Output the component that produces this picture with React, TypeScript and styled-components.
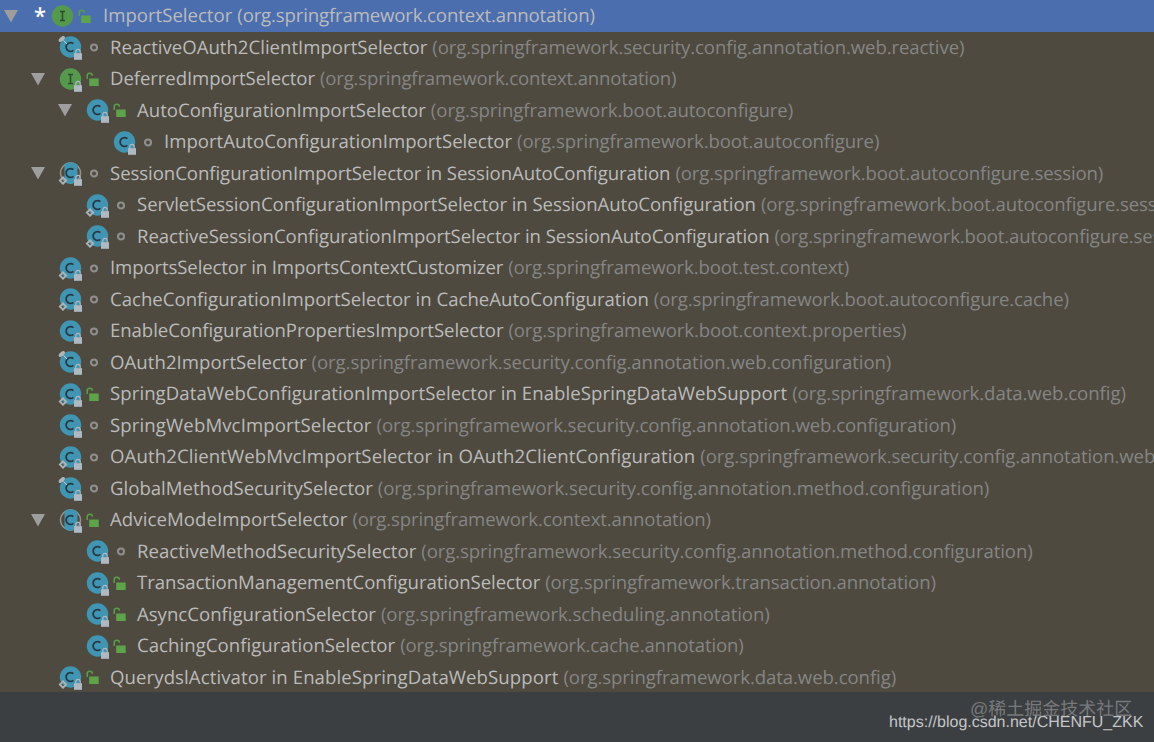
import React from "react";
import styled, { createGlobalStyle } from "styled-components";

const Global = createGlobalStyle`
  html, body { margin: 0; padding: 0; background: #3c3f41; }
  #root { width: 1154px; height: 742px; overflow: hidden; }
`;

const Page = styled.div`
  width: 1154px;
  height: 742px;
  display: flex;
  flex-direction: column;
  overflow: hidden;
  background: #3c3f41;
  position: relative;
  font-family: "Open Sans", "Noto Sans", sans-serif;
  text-rendering: geometricPrecision;
`;

const Tree = styled.div`
  height: 692px;
  flex: none;
  background: #4e4a3f;
  display: flex;
  flex-direction: column;
  overflow: hidden;
`;

const Row = styled.div<{ $level: number; $selected?: boolean }>`
  height: 31.5px;
  flex: none;
  box-sizing: border-box;
  padding-bottom: 0.5px;
  display: flex;
  align-items: center;
  white-space: nowrap;
  padding-left: ${(p) => (p.$level === 0 ? 1 : 28 + (p.$level - 1) * 27)}px;
  background: ${(p) => (p.$selected ? "#4b6eaf" : "transparent")};
  font-size: 18.6px;
`;

const ArrowSlot = styled.span`
  width: 20px;
  flex: none;
  display: flex;
  justify-content: center;
`;

const Star = styled.span`
  width: 29px;
  flex: none;
  text-align: right;
  padding-right: 4px;
  box-sizing: border-box;
  color: #ffffff;
  font-size: 22px;
  font-weight: 600;
`;

const IconSlot = styled.span`
  width: 24px;
  margin-left: 10px;
  flex: none;
  display: flex;
`;

const StarIconSlot = styled(IconSlot)`
  margin-left: 0;
`;

const VisSlot = styled.span`
  width: 16px;
  margin: 0 8px 0 4px;
  flex: none;
  display: flex;
  justify-content: center;
`;

const Name = styled.span<{ $track?: number }>`
  color: #bbbbbb;
  letter-spacing: ${(p) => p.$track ?? 0}px;
`;

const SelectedName = styled(Name)`
  margin-left: 1px;
`;

const Pkg = styled.span<{ $track?: number }>`
  color: #858585;
  margin-left: 5px;
  letter-spacing: ${(p) => p.$track ?? 0}px;
`;

const SelectedPkg = styled(Pkg)`
  color: #bbbbbb;
`;

const Footer = styled.div`
  flex: 1;
  background: #3c3f41;
`;

const Watermark = styled.div`
  position: absolute;
  left: 970px;
  top: 695px;
  font-family: "Liberation Sans", "Noto Sans CJK SC", sans-serif;
  font-size: 18px;
  color: #77797b;
  white-space: nowrap;
`;

const Url = styled.div`
  position: absolute;
  left: 889px;
  top: 714px;
  font-family: "Liberation Sans", sans-serif;
  font-size: 16px;
  color: #c4c6c8;
  white-space: nowrap;
`;

const Arrow = () => (
  <svg width="16" height="14" viewBox="0 0 16 14">
    <path d="M1 1h14L8 13.5z" fill="#9e9e9e" />
  </svg>
);

type Badge = "pin" | "diamond" | "none";

const Lock = () => (
  <g>
    <path d="M17.8 20v-2.4a2.2 2.2 0 0 1 4.4 0v2.4" fill="none" stroke="#afb9c2" strokeWidth="1.2" />
    <rect x="16" y="19.2" width="8" height="6.6" fill="#afb9c2" />
  </g>
);

const ClassIcon = ({
  letter,
  badge = "none",
  abstract,
  noLock,
}: {
  letter: "C" | "I";
  badge?: Badge;
  abstract?: boolean;
  noLock?: boolean;
}) => {
  const fill = letter === "I" ? "#559a4c" : "#4095b3";
  return (
    <svg width="24" height="26" viewBox="0 0 24 26">
      {abstract ? (
        <>
          <circle cx="12.5" cy="13" r="10" fill="none" stroke="#94948f" strokeWidth="1.4" />
          <path d="M6.5 4.14A10.7 10.7 0 0 1 19.5 4.91V21.09A10.7 10.7 0 0 1 6.5 21.86Z" fill={fill} />
        </>
      ) : (
        <circle cx="12.5" cy="13" r="10.7" fill={fill} />
      )}
      {letter === "C" ? (
        <path d="M15.4 9.6a4.5 4.5 0 0 0-7.3 3.4a4.5 4.5 0 0 0 7.3 3.4" fill="none" stroke="#273842" strokeWidth="1.7" />
      ) : (
        <path d="M10 8.5h5M12.5 8.5v9M10 17.5h5" fill="none" stroke="#2f4a30" strokeWidth="1.5" />
      )}
      {badge === "pin" && (
        <>
          <path d="M5.5 6.5l3.5 3.5" stroke="#c3d3da" strokeWidth="1" />
          <ellipse cx="3.8" cy="5" rx="3.7" ry="2" transform="rotate(-40 3.8 5)" fill="#afb5b8" />
        </>
      )}
      {badge === "diamond" && (
        <path d="M5 16l4.5 4.5L5 25 .5 20.5zM5 18.7l-1.8 1.8L5 22.3l1.8-1.8z" fill="#aab2b6" fillRule="evenodd" />
      )}
      {!noLock && <Lock />}
    </svg>
  );
};

const Ring = () => (
  <svg width="16" height="16" viewBox="0 0 16 16">
    <circle cx="8" cy="8.5" r="3" fill="none" stroke="#8f8f8d" strokeWidth="2.1" />
  </svg>
);

const OpenLock = () => (
  <svg width="16" height="16" viewBox="0 0 16 16">
    <path d="M1.2 8V5a2.6 2.6 0 0 1 5.2-.3" fill="none" stroke="#5a9e47" strokeWidth="1.5" />
    <rect x="3.2" y="7.5" width="9.5" height="7.5" fill="#5da34a" />
  </svg>
);

type Item = {
  level: number;
  letter: "C" | "I";
  name: string;
  pkg: string;
  nameTrack?: number;
  pkgTrack?: number;
  arrow?: boolean;
  badge?: Badge;
  abstract?: boolean;
  open?: boolean;
};

const items: Item[] = [
  { level: 1, letter: "C", badge: "pin", pkgTrack: -0.1, name: "ReactiveOAuth2ClientImportSelector", pkg: "(org.springframework.security.config.annotation.web.reactive)" },
  { level: 1, letter: "I", arrow: true, open: true, nameTrack: -0.09, pkgTrack: -0.175, name: "DeferredImportSelector", pkg: "(org.springframework.context.annotation)" },
  { level: 2, letter: "C", arrow: true, open: true, pkgTrack: -0.075, name: "AutoConfigurationImportSelector", pkg: "(org.springframework.boot.autoconfigure)" },
  { level: 3, letter: "C", pkgTrack: -0.075, name: "ImportAutoConfigurationImportSelector", pkg: "(org.springframework.boot.autoconfigure)" },
  { level: 1, letter: "C", arrow: true, abstract: true, badge: "diamond", nameTrack: -0.065, pkgTrack: -0.14, name: "SessionConfigurationImportSelector in SessionAutoConfiguration", pkg: "(org.springframework.boot.autoconfigure.session)" },
  { level: 2, letter: "C", badge: "diamond", nameTrack: -0.07, pkgTrack: -0.14, name: "ServletSessionConfigurationImportSelector in SessionAutoConfiguration", pkg: "(org.springframework.boot.autoconfigure.session)" },
  { level: 2, letter: "C", badge: "diamond", nameTrack: -0.06, pkgTrack: -0.14, name: "ReactiveSessionConfigurationImportSelector in SessionAutoConfiguration", pkg: "(org.springframework.boot.autoconfigure.session)" },
  { level: 1, letter: "C", badge: "diamond", nameTrack: -0.115, pkgTrack: -0.13, name: "ImportsSelector in ImportsContextCustomizer", pkg: "(org.springframework.boot.test.context)" },
  { level: 1, letter: "C", badge: "diamond", pkgTrack: -0.11, name: "CacheConfigurationImportSelector in CacheAutoConfiguration", pkg: "(org.springframework.boot.autoconfigure.cache)" },
  { level: 1, letter: "C", nameTrack: -0.07, pkgTrack: -0.13, name: "EnableConfigurationPropertiesImportSelector", pkg: "(org.springframework.boot.context.properties)" },
  { level: 1, letter: "C", badge: "pin", nameTrack: 0.05, pkgTrack: -0.09, name: "OAuth2ImportSelector", pkg: "(org.springframework.security.config.annotation.web.configuration)" },
  { level: 1, letter: "C", badge: "diamond", open: true, nameTrack: 0.07, pkgTrack: -0.05, name: "SpringDataWebConfigurationImportSelector in EnableSpringDataWebSupport", pkg: "(org.springframework.data.web.config)" },
  { level: 1, letter: "C", nameTrack: 0.115, pkgTrack: -0.09, name: "SpringWebMvcImportSelector", pkg: "(org.springframework.security.config.annotation.web.configuration)" },
  { level: 1, letter: "C", badge: "diamond", nameTrack: 0.1, pkgTrack: -0.09, name: "OAuth2ClientWebMvcImportSelector in OAuth2ClientConfiguration", pkg: "(org.springframework.security.config.annotation.web.configuration)" },
  { level: 1, letter: "C", badge: "pin", pkgTrack: -0.09, name: "GlobalMethodSecuritySelector", pkg: "(org.springframework.security.config.annotation.method.configuration)" },
  { level: 1, letter: "C", arrow: true, abstract: true, open: true, nameTrack: 0.08, pkgTrack: -0.125, name: "AdviceModeImportSelector", pkg: "(org.springframework.context.annotation)" },
  { level: 2, letter: "C", pkgTrack: -0.09, name: "ReactiveMethodSecuritySelector", pkg: "(org.springframework.security.config.annotation.method.configuration)" },
  { level: 2, letter: "C", open: true, nameTrack: -0.05, pkgTrack: -0.135, name: "TransactionManagementConfigurationSelector", pkg: "(org.springframework.transaction.annotation)" },
  { level: 2, letter: "C", open: true, pkgTrack: -0.07, name: "AsyncConfigurationSelector", pkg: "(org.springframework.scheduling.annotation)" },
  { level: 2, letter: "C", open: true, nameTrack: 0.035, pkgTrack: -0.135, name: "CachingConfigurationSelector", pkg: "(org.springframework.cache.annotation)" },
  { level: 1, letter: "C", badge: "diamond", open: true, nameTrack: 0.085, pkgTrack: -0.08, name: "QuerydslActivator in EnableSpringDataWebSupport", pkg: "(org.springframework.data.web.config)" },
];

export default function App() {
  return (
    <Page>
      <Global />
      <Tree>
        <Row $level={0} $selected>
          <ArrowSlot><Arrow /></ArrowSlot>
          <Star>*</Star>
          <StarIconSlot><ClassIcon letter="I" noLock /></StarIconSlot>
          <VisSlot><OpenLock /></VisSlot>
          <SelectedName>ImportSelector</SelectedName>
          <SelectedPkg $track={-0.15}>(org.springframework.context.annotation)</SelectedPkg>
        </Row>
        {items.map((it) => (
          <Row key={it.name} $level={it.level}>
            <ArrowSlot>{it.arrow && <Arrow />}</ArrowSlot>
            <IconSlot>
              <ClassIcon letter={it.letter} badge={it.badge} abstract={it.abstract} />
            </IconSlot>
            <VisSlot>{it.open ? <OpenLock /> : <Ring />}</VisSlot>
            <Name $track={it.nameTrack}>{it.name}</Name>
            <Pkg $track={it.pkgTrack}>{it.pkg}</Pkg>
          </Row>
        ))}
      </Tree>
      <Footer />
      <Watermark>@稀土掘金技术社区</Watermark>
      <Url>https://blog.csdn.net/CHENFU_ZKK</Url>
    </Page>
  );
}
